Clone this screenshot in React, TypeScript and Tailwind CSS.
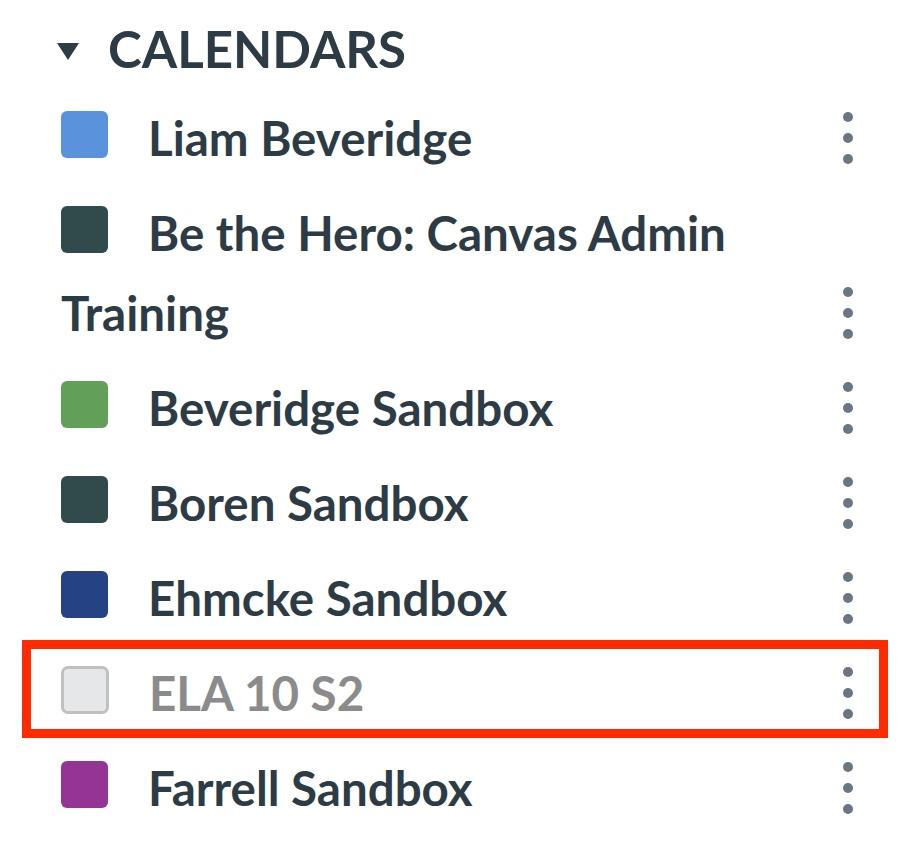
import React from 'react';

// Calendar sidebar list (zoomed Canvas style)

type Cal = { name: string; color: string; disabled?: boolean };

const calendars: Cal[] = [
  { name: 'Liam Beveridge', color: 'bg-[#5a93dc]' },
  { name: 'Be the Hero: Canvas Admin Training', color: 'bg-[#314b4c]' },
  { name: 'Beveridge Sandbox', color: 'bg-[#62a05a]' },
  { name: 'Boren Sandbox', color: 'bg-[#314b4c]' },
  { name: 'Ehmcke Sandbox', color: 'bg-[#254284]' },
  { name: 'ELA 10 S2', color: '', disabled: true },
  { name: 'Farrell Sandbox', color: 'bg-[#943595]' },
];

function Dots() {
  return (
    <svg width="10" height="52" viewBox="0 0 10 52" className="text-[#6b7680]">
      <circle cx="5" cy="5" r="5" fill="currentColor" />
      <circle cx="5" cy="26" r="5" fill="currentColor" />
      <circle cx="5" cy="47" r="5" fill="currentColor" />
    </svg>
  );
}

export default function App() {
  return (
    <div className="min-h-screen w-full bg-white text-[#2d3b45]" style={{ fontFamily: 'Lato, "Open Sans", sans-serif' }}>
      {/* header */}
      <div className="flex items-center pl-[57px] pt-[19px]">
        <svg width="22" height="17" viewBox="0 0 22 17" className="mt-[4px] text-[#2d3b45]">
          <polygon points="0,0 22,0 11,17" fill="currentColor" />
        </svg>
        <h2 className="ml-[29px] text-[51px] font-bold leading-[60px] uppercase">Calendars</h2>
      </div>

      {/* list */}
      <ul className="mt-[11px] px-[22px]">
        {calendars.map((c) => (
          <li key={c.name} className="relative flex items-end py-[7.5px] pl-[39px] pr-[43px]">
            <span
              className={
                'flex-1 pr-[20px] text-[47.5px] font-bold leading-[80px] ' +
                (c.disabled ? 'text-[#8b8b8b]' : '')
              }
            >
              {c.disabled ? (
                <span className="mr-[40px] inline-block h-[48px] w-[48px] rounded-[7px] border-[3px] border-[#c0c0c0] bg-[#e6e7e9] align-[-3px]" />
              ) : (
                <span className={'mr-[40px] inline-block h-[47px] w-[47px] rounded-[6px] align-[-2px] ' + c.color} />
              )}
              {c.name}
            </span>
            <span className="flex h-[80px] w-[10px] items-center justify-center">
              <Dots />
            </span>
            {c.disabled && (
              <span className="pointer-events-none absolute top-[-5px] right-[8px] bottom-[2px] left-0 border-[9px] border-[#ff2a00]" />
            )}
          </li>
        ))}
      </ul>
    </div>
  );
}
